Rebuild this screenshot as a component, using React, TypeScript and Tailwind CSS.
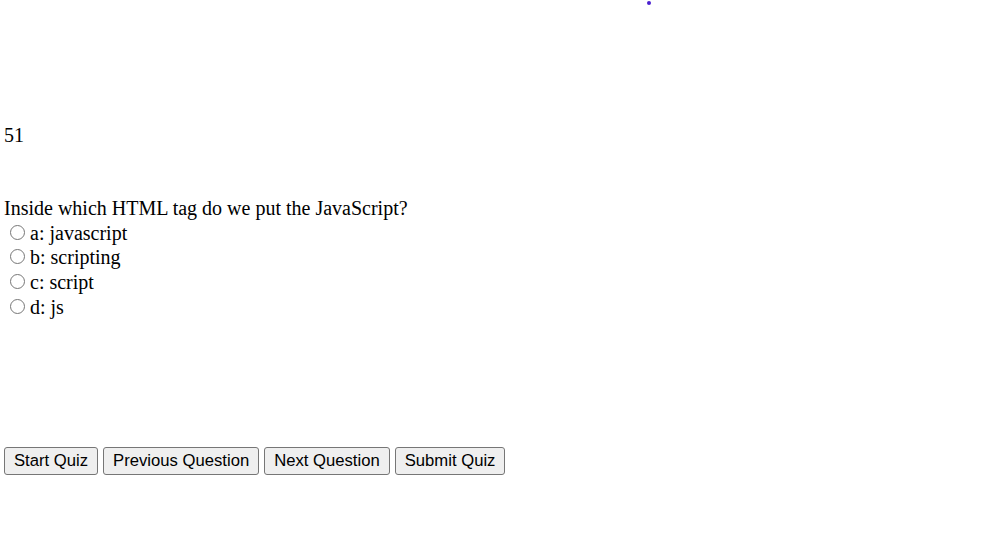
import { useState } from "react";

const OPTIONS = [
  { key: "a", label: "javascript" },
  { key: "b", label: "scripting" },
  { key: "c", label: "script" },
  { key: "d", label: "js" },
];

const BUTTONS = ["Start Quiz", "Previous Question", "Next Question", "Submit Quiz"];

export default function App() {
  const [choice, setChoice] = useState<string | null>(null);

  return (
    <div className="relative min-h-[547px] bg-white px-[4px] pt-[124px] text-black font-['Liberation_Serif',serif] text-[20px]">
      <span className="absolute left-[647px] top-[1px] h-[4px] w-[4px] rounded-full bg-[#4a1fd0]" />

      <div className="leading-[23px]">51</div>

      <div className="mt-[49.5px] leading-[23px]">Inside which HTML tag do we put the JavaScript?</div>

      <div className="mt-[1px]">
        {OPTIONS.map((o) => (
          <label key={o.key} className="block leading-[24.75px]">
            <input
              type="radio"
              name="answer"
              checked={choice === o.key}
              onChange={() => setChoice(o.key)}
              className="m-0 ml-[6px] mr-[5px] h-[15px] w-[15px] align-baseline"
            />
            {o.key}: {o.label}
          </label>
        ))}
      </div>

      <div className="mt-[127px] flex gap-[5px]">
        {BUTTONS.map((b) => (
          <button
            key={b}
            type="button"
            className="h-[28px] rounded-[3px] border border-[#767676] bg-[#efefef] px-[9px] font-['Liberation_Sans',Arial,sans-serif] text-[16.67px] text-black hover:bg-[#e5e5e5]"
          >
            {b}
          </button>
        ))}
      </div>
    </div>
  );
}
